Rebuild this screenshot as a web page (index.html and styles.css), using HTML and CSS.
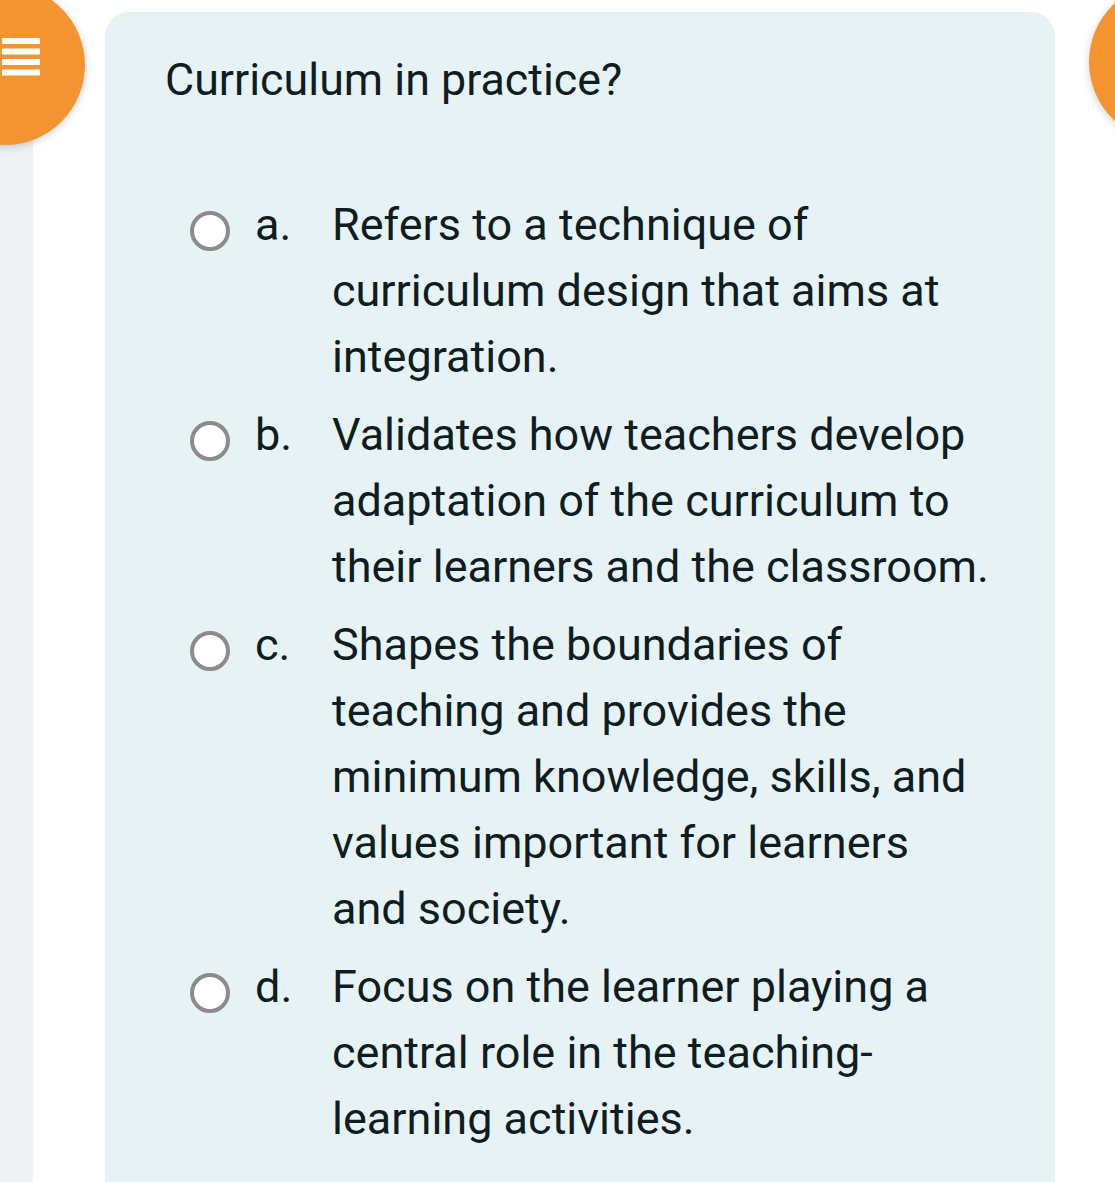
FILE: index.html
```html
<!DOCTYPE html>
<html>
<head>
<meta charset="utf-8">
<link rel="stylesheet" href="styles.css">
</head>
<body>
<div class="screen">
  <div class="page">
    <div class="rail"></div>
    <main class="card">
      <h1 class="question">Curriculum in practice?</h1>
      <ul class="options">
        <li class="option">
          <span class="radio"></span>
          <span class="letter">a.</span>
          <span class="text">Refers to a technique of curriculum design that aims at integration.</span>
        </li>
        <li class="option">
          <span class="radio"></span>
          <span class="letter">b.</span>
          <span class="text">Validates how teachers develop adaptation of the curriculum to their learners and the classroom.</span>
        </li>
        <li class="option">
          <span class="radio"></span>
          <span class="letter">c.</span>
          <span class="text">Shapes the boundaries of teaching and provides the minimum knowledge, skills, and values important for learners and society.</span>
        </li>
        <li class="option">
          <span class="radio"></span>
          <span class="letter">d.</span>
          <span class="text">Focus on the learner playing a central role in the teaching-learning activities.</span>
        </li>
      </ul>
    </main>
  </div>
  <button class="fab fab-left" aria-label="Menu">
    <svg width="38" height="38" viewBox="0 0 38 38"><rect x="0" y="0" width="38" height="6" fill="#fff"/><rect x="0" y="10.5" width="38" height="6" fill="#fff"/><rect x="0" y="21" width="38" height="6" fill="#fff"/><rect x="0" y="31.5" width="38" height="6" fill="#fff"/></svg>
  </button>
  <button class="fab fab-right" aria-label="Next"></button>
</div>
</body>
</html>
```

FILE: styles.css
```css
html, body {
  margin: 0;
  padding: 0;
  background: #ffffff;
}
body {
  font-family: Roboto, "Liberation Sans", sans-serif;
  color: #0e1d22;
}
.screen {
  position: relative;
  width: 1115px;
  height: 1182px;
  overflow: hidden;
}
.page {
  display: flex;
  gap: 72px;
  height: 1182px;
}
.rail {
  width: 33px;
  flex: none;
  background: #eff2f5;
}
.card {
  width: 950px;
  flex: none;
  margin-top: 12px;
  background: #e6f2f4;
  border-radius: 24px 24px 0 0;
  padding: 36px 0 0 60px;
  box-sizing: border-box;
}
.question {
  margin: 0;
  font-size: 44.8px;
  font-weight: 400;
  line-height: 64px;
}
.options {
  list-style: none;
  margin: 80px 0 0 25px;
  padding: 0;
  display: flex;
  flex-direction: column;
  gap: 12px;
}
.option {
  display: flex;
  align-items: flex-start;
  font-size: 45px;
  line-height: 66px;
}
.radio {
  flex: none;
  width: 40px;
  height: 40px;
  box-sizing: border-box;
  border: 4px solid #8c8c8e;
  border-radius: 50%;
  background: #ffffff;
  margin-top: 19px;
}
.letter {
  flex: none;
  width: 77px;
  margin-left: 25px;
}
.text {
  width: 658px;
}
.fab {
  position: absolute;
  border: none;
  padding: 0;
  border-radius: 50%;
  background: #f39431;
  box-shadow: 0 2px 8px rgba(0,0,0,0.18);
}
.fab-left {
  left: -75px;
  top: -15px;
  width: 160px;
  height: 160px;
  display: flex;
  align-items: flex-start;
  justify-content: flex-end;
  padding-right: 45px;
  padding-top: 53px;
  box-sizing: border-box;
}
.fab-left svg {
  display: block;
}
.fab-right {
  left: 1089px;
  top: -18px;
  width: 160px;
  height: 160px;
}
```
